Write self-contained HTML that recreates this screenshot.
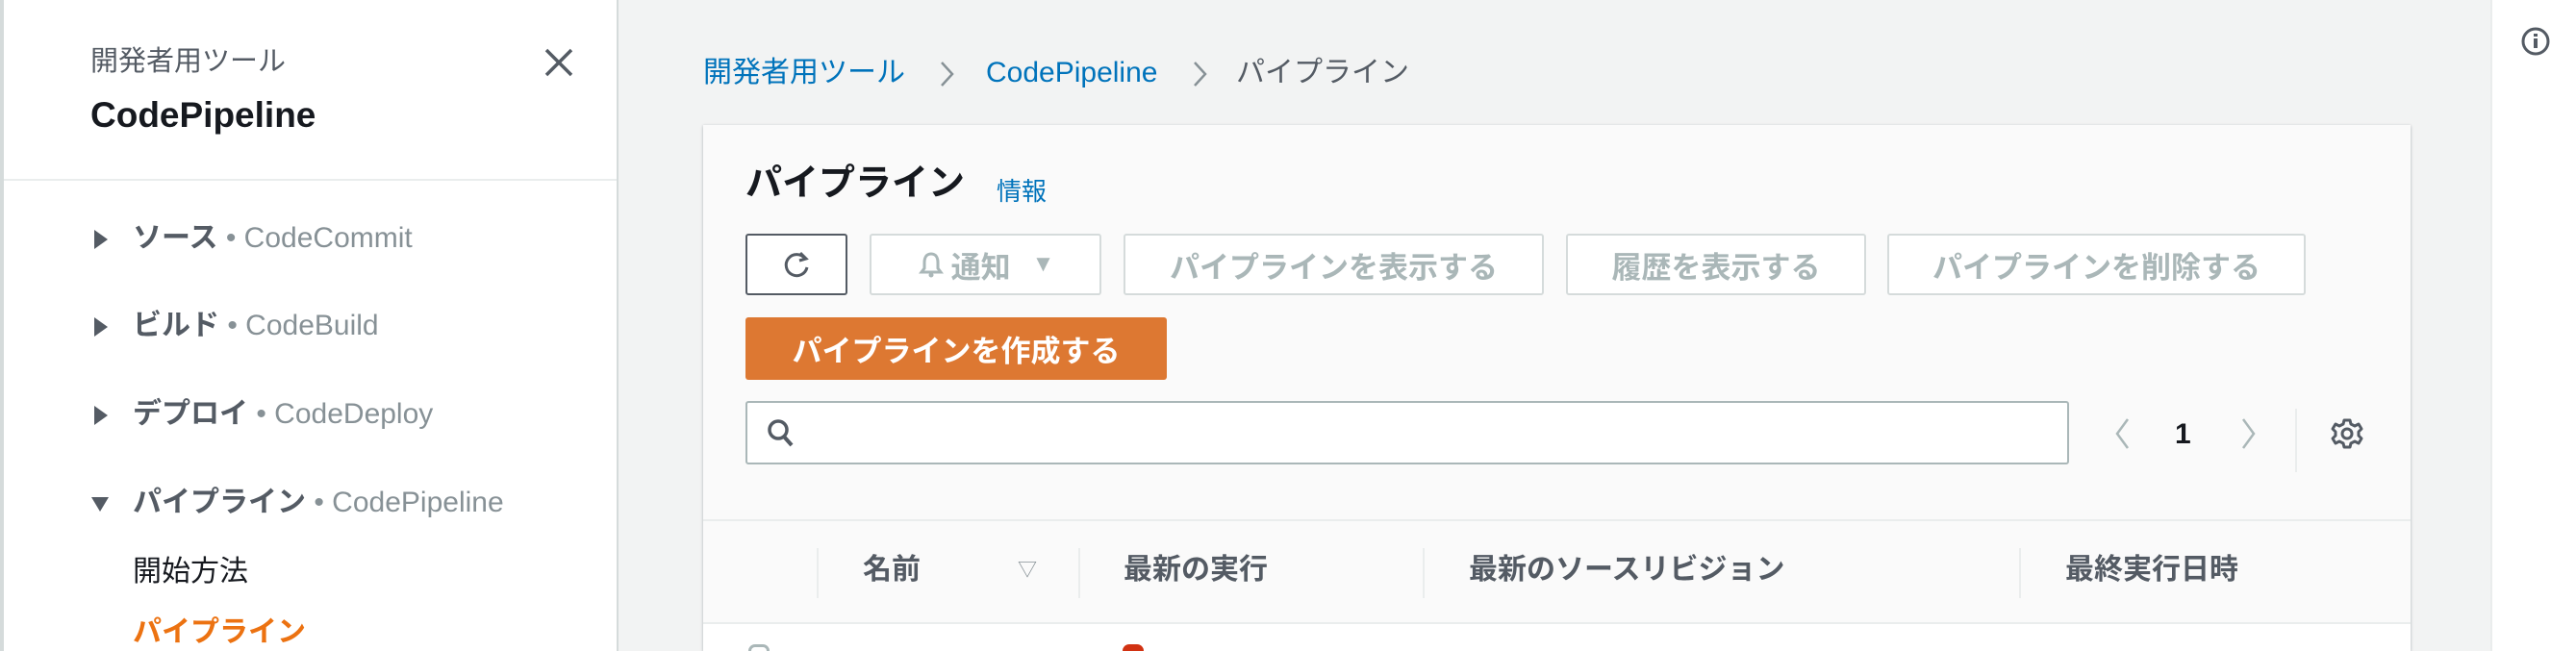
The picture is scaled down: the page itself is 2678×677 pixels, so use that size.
<!DOCTYPE html>
<html style="overflow:hidden;width:2678px;height:677px"><head><meta charset="utf-8"><style>
*{margin:0;padding:0;box-sizing:border-box}
body{width:2678px;height:677px;overflow:hidden;background:#f2f3f3;font-family:"Liberation Sans","Noto Sans CJK JP",sans-serif;position:relative;color:#16191f}
.a{position:absolute;white-space:nowrap;line-height:1}
#side{position:absolute;left:0;top:0;width:643px;height:677px;background:#fff;border-left:4px solid #d5dbdb;border-right:2px solid #d5dbdb}
.nav{font-size:30px;font-weight:bold;color:#545b64}
.nav span{font-weight:normal;color:#879196}
.tri{position:absolute;width:0;height:0}
#card{position:absolute;left:731px;top:130px;width:1775px;height:547px;background:#fafafa;box-shadow:0 1px 3px rgba(0,28,36,.3)}
.btn{position:absolute;top:243px;height:64px;border:2px solid #d5dbdb;border-radius:3px;background:#fff;color:#aab7b8;font-size:31px;font-weight:bold;display:flex;align-items:center;justify-content:center}
.th{font-size:30px;font-weight:bold;color:#545b64}
.sep{position:absolute;top:570px;width:2px;height:52px;background:#eaeded}
</style></head><body>
<div id="side">
<div class="a" style="left:90px;top:50px;font-size:29px;color:#545b64">開発者用ツール</div>
<div class="a" style="left:90px;top:101px;font-size:37px;font-weight:bold;color:#16191f">CodePipeline</div>
<svg class="a" style="left:560px;top:48px" width="34" height="34" viewBox="0 0 34 34"><path d="M4 4L30 30M30 4L4 30" stroke="#545b64" stroke-width="3.5"/></svg>
<div style="position:absolute;left:0;top:186px;width:637px;height:2px;background:#eaeded"></div>
<div class="tri" style="left:94px;top:239px;border-left:14px solid #545b64;border-top:10px solid transparent;border-bottom:10px solid transparent"></div>
<div class="a nav" style="left:134px;top:233px">ソース <span>• CodeCommit</span></div>
<div class="tri" style="left:94px;top:330px;border-left:14px solid #545b64;border-top:10px solid transparent;border-bottom:10px solid transparent"></div>
<div class="a nav" style="left:134px;top:324px">ビルド <span>• CodeBuild</span></div>
<div class="tri" style="left:94px;top:422px;border-left:14px solid #545b64;border-top:10px solid transparent;border-bottom:10px solid transparent"></div>
<div class="a nav" style="left:134px;top:416px">デプロイ <span>• CodeDeploy</span></div>
<div class="tri" style="left:91px;top:517px;border-top:15px solid #545b64;border-left:9px solid transparent;border-right:9px solid transparent"></div>
<div class="a nav" style="left:134px;top:508px">パイプライン <span>• CodePipeline</span></div>
<div class="a" style="left:134px;top:580px;font-size:30px;color:#16191f">開始方法</div>
<div class="a" style="left:134px;top:643px;font-size:30px;font-weight:bold;color:#ec7211">パイプライン</div>
</div>
<div style="position:absolute;left:2589px;top:0;width:89px;height:677px;background:#fff;border-left:2px solid #eaeded"></div>
<svg class="a" style="left:2620px;top:27px" width="32" height="32" viewBox="0 0 32 32"><circle cx="16" cy="16" r="13" fill="none" stroke="#545b64" stroke-width="3"/><rect x="14" y="13" width="4" height="10" fill="#545b64"/><rect x="14" y="8" width="4" height="3" fill="#545b64"/></svg>
<div class="a" style="left:731px;top:61px;font-size:30px;color:#0073bb">開発者用ツール</div>
<svg class="a" style="left:975px;top:62px" width="20" height="30"><path d="M4 3L15 15L4 27" fill="none" stroke="#879196" stroke-width="2.5"/></svg>
<div class="a" style="left:1025px;top:61px;font-size:30px;color:#0073bb">CodePipeline</div>
<svg class="a" style="left:1238px;top:62px" width="20" height="30"><path d="M4 3L15 15L4 27" fill="none" stroke="#879196" stroke-width="2.5"/></svg>
<div class="a" style="left:1285px;top:61px;font-size:30px;color:#545b64">パイプライン</div>
<div id="card"></div>
<div style="position:absolute;left:731px;top:647px;width:1775px;height:30px;background:#fff;border-top:2px solid #eaeded"></div>
<div style="position:absolute;left:731px;top:540px;width:1775px;height:2px;background:#eaeded"></div>
<div class="a" style="left:775px;top:172px;font-size:38px;font-weight:bold">パイプライン</div>
<div class="a" style="left:1036px;top:186px;font-size:26px;color:#0073bb">情報</div>
<div class="btn" style="left:775px;width:106px;border-color:#545b64;color:#545b64"><svg width="36" height="36" viewBox="0 0 36 36"><path d="M27 12A11 11 0 1 0 29 21" fill="none" stroke="#545b64" stroke-width="3"/><path d="M22 6L28 12L21 14" fill="none" stroke="#545b64" stroke-width="3"/></svg></div>
<div class="btn" style="left:904px;width:241px"><svg width="30" height="30" viewBox="0 0 30 30" style="margin-right:6px"><path d="M15 4C10 4 8 8 8 13V19L5 23H25L22 19V13C22 8 20 4 15 4Z" fill="none" stroke="#aab7b8" stroke-width="3"/><circle cx="15" cy="26" r="2.5" fill="#aab7b8"/></svg>通知<span style="margin-left:22px;font-size:24px">▼</span></div>
<div class="btn" style="left:1168px;width:437px">パイプラインを表示する</div>
<div class="btn" style="left:1628px;width:312px">履歴を表示する</div>
<div class="btn" style="left:1962px;width:435px">パイプラインを削除する</div>
<div class="btn" style="left:775px;top:330px;width:438px;height:65px;background:#dd7832;border:none;color:#fff;font-size:31px">パイプラインを作成する</div>
<div style="position:absolute;left:775px;top:417px;width:1376px;height:66px;background:#fff;border:2px solid #aab7b8;border-radius:3px"></div>
<svg class="a" style="left:795px;top:433px" width="34" height="34" viewBox="0 0 34 34"><circle cx="14" cy="14" r="9" fill="none" stroke="#545b64" stroke-width="3.5"/><path d="M20 21L28 30" stroke="#545b64" stroke-width="4"/></svg>
<svg class="a" style="left:2195px;top:433px" width="22" height="36"><path d="M17 3L6 18L17 33" fill="none" stroke="#aab7b8" stroke-width="2.5"/></svg>
<div class="a" style="left:2261px;top:437px;font-size:30px;font-weight:bold">1</div>
<svg class="a" style="left:2327px;top:433px" width="22" height="36"><path d="M5 3L16 18L5 33" fill="none" stroke="#aab7b8" stroke-width="2.5"/></svg>
<div style="position:absolute;left:2386px;top:425px;width:2px;height:66px;background:#eaeded"></div>
<svg class="a" style="left:2422px;top:433px" width="36" height="36" viewBox="0 0 36 36"><circle cx="18" cy="18" r="5" fill="none" stroke="#545b64" stroke-width="3"/><path d="M15 4H21L22 8L26 10L30 8L33 13L30 16V20L33 23L30 28L26 26L22 28L21 32H15L14 28L10 26L6 28L3 23L6 20V16L3 13L6 8L10 10L14 8Z" fill="none" stroke="#545b64" stroke-width="3" stroke-linejoin="round"/></svg>
<div class="sep" style="left:849px"></div>
<div class="sep" style="left:1121px"></div>
<div class="sep" style="left:1479px"></div>
<div class="sep" style="left:2099px"></div>
<div class="a th" style="left:897px;top:578px">名前</div>
<div class="a" style="left:1058px;top:583px;font-size:20px;color:#879196">▽</div>
<div class="a th" style="left:1168px;top:578px">最新の実行</div>
<div class="a th" style="left:1527px;top:578px">最新のソースリビジョン</div>
<div class="a th" style="left:2147px;top:578px">最終実行日時</div>
<div style="position:absolute;left:778px;top:670px;width:22px;height:7px;border-radius:11px 11px 0 0;border:3px solid #aab7b8;border-bottom:none"></div>
<div style="position:absolute;left:1167px;top:670px;width:22px;height:7px;border-radius:11px 11px 0 0;background:#d13212"></div>
</body></html>
